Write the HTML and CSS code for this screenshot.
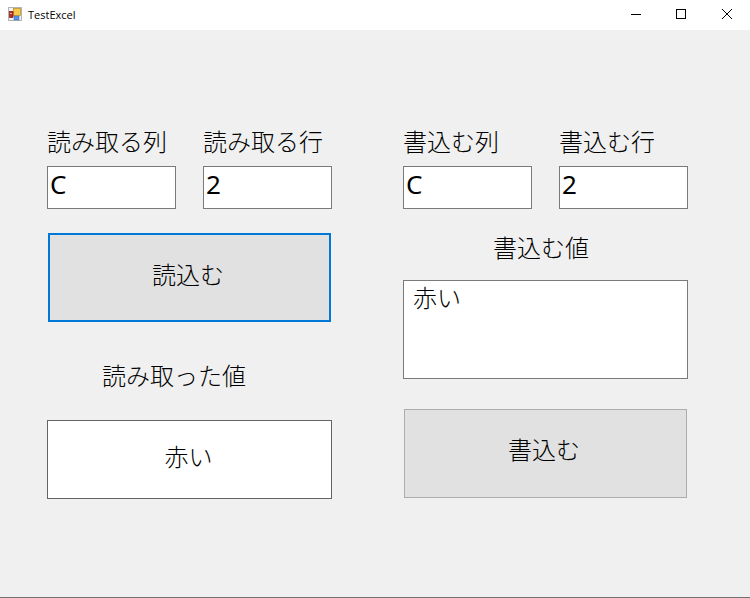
FILE: index.html
```html
<!DOCTYPE html>
<html lang="ja">
<head>
<meta charset="utf-8">
<title>TestExcel</title>
<link rel="stylesheet" href="styles.css">
</head>
<body>
<div class="window">
  <header class="titlebar">
    <svg class="app-icon" width="14" height="14" viewBox="0 0 14 14" aria-hidden="true">
      <rect x="0.5" y="0.5" width="13" height="13" fill="#f2f2f2" stroke="#b4b4b4"/>
      <rect x="5.5" y="1.5" width="7" height="7" fill="#f7c948" stroke="#b98a1c" stroke-width="0.7"/>
      <rect x="1.5" y="4.5" width="3.5" height="6" fill="#c1271d" stroke="#7d1a14" stroke-width="0.7"/>
      <rect x="2" y="6" width="2" height="1" fill="#f1b5b0"/>
      <rect x="6" y="9" width="5" height="4" fill="#5b93e6" stroke="#3565b0" stroke-width="0.5"/>
    </svg>
    <span class="title">TestExcel</span>
    <div class="controls">
      <span class="control">
        <svg width="12" height="12" viewBox="0 0 12 12"><path d="M2 6.5H12" stroke="#000" fill="none"/></svg>
      </span>
      <span class="control">
        <svg width="12" height="12" viewBox="0 0 12 12"><rect x="1.5" y="1.5" width="9" height="9" stroke="#000" fill="none"/></svg>
      </span>
      <span class="control">
        <svg width="12" height="12" viewBox="0 0 12 12"><path d="M1 1L11 11M11 1L1 11" stroke="#000" fill="none"/></svg>
      </span>
    </div>
  </header>
  <main class="client">
    <section class="column">
      <div class="fields">
        <label class="field"><span class="label">読み取る列</span><input class="box" value="C" readonly></label>
        <label class="field"><span class="label">読み取る行</span><input class="box" value="2" readonly></label>
      </div>
      <button class="btn btn-focus" type="button">読込む</button>
      <div class="caption caption-read">読み取った値</div>
      <div class="output">赤い</div>
    </section>
    <section class="column">
      <div class="fields">
        <label class="field"><span class="label">書込む列</span><input class="box" value="C" readonly></label>
        <label class="field"><span class="label">書込む行</span><input class="box" value="2" readonly></label>
      </div>
      <div class="caption caption-write">書込む値</div>
      <textarea class="area" readonly>赤い</textarea>
      <button class="btn btn-plain" type="button">書込む</button>
    </section>
  </main>
</div>
</body>
</html>
```
FILE: styles.css
```css
* { box-sizing: border-box; }
html, body { margin: 0; height: 100%; }
body { background: #f0f0f0; overflow: hidden; }
.window {
  width: 750px;
  height: 598px;
  display: flex;
  flex-direction: column;
  background: #f0f0f0;
  border-bottom: 1px solid #707070;
  font-family: "Noto Sans CJK JP", "Noto Sans", sans-serif;
  color: #000;
}
.titlebar {
  height: 30px;
  flex: none;
  display: flex;
  align-items: center;
  background: #fff;
  padding-left: 8px;
}
.app-icon { flex: none; margin-bottom: 2px; }
.title {
  margin-left: 6px;
  padding-bottom: 1px;
  font: 11px "Open Sans", "Liberation Sans", sans-serif;
}
.controls { margin-left: auto; display: flex; height: 100%; }
.control {
  width: 46px;
  display: flex;
  align-items: center;
  justify-content: center;
  padding-bottom: 2px;
}
.client {
  flex: 1;
  display: flex;
  gap: 71px;
  padding: 96px 0 0 47px;
}
.column { width: 285px; display: flex; flex-direction: column; }
.fields { display: flex; justify-content: space-between; }
.field { width: 129px; display: flex; flex-direction: column; }
.label {
  height: 40px;
  font-size: 24px;
  line-height: 30px;
  font-weight: 300;
  white-space: nowrap;
}
.box, .area, .output {
  border: 1px solid #7a7a7a;
  background: #fff;
  color: #000;
  font-family: "Noto Sans", "Noto Sans CJK JP", sans-serif;
  font-size: 24px;
  border-radius: 0;
  outline: none;
}
.box {
  width: 129px;
  height: 43px;
  padding: 0 2px 7px;
  font-size: 26px;
  font-weight: 400;
}
.btn {
  display: block;
  font-family: inherit;
  font-size: 24px;
  font-weight: 300;
  color: #000;
  background: #e1e1e1;
  border-radius: 0;
}
.btn-focus {
  width: 283px;
  height: 89px;
  margin: 24px 0 0 1px;
  padding: 0 3px 8px 0;
  border: 2px solid #0078d7;
}
.btn-plain {
  width: 283px;
  height: 89px;
  margin: 30px 0 0 1px;
  padding: 0 3px 10px 0;
  border: 1px solid #adadad;
}
.caption {
  font-size: 24px;
  font-weight: 300;
  line-height: 30px;
  white-space: nowrap;
}
.caption-read { margin: 38px 0 0 55px; }
.caption-write { margin: 23px 0 0 90px; }
.output {
  margin-top: 30px;
  height: 79px;
  display: flex;
  align-items: center;
  justify-content: center;
  font-family: "Noto Sans CJK JP", sans-serif;
  font-weight: 300;
  border-color: #646464;
  padding: 0 2px 8px 0;
}
.area {
  display: block;
  margin-top: 18px;
  width: 285px;
  height: 99px;
  padding: 1px 9px 0;
  resize: none;
  overflow: hidden;
  line-height: 30px;
  font-family: "Noto Sans CJK JP", sans-serif;
  font-weight: 300;
}
```
